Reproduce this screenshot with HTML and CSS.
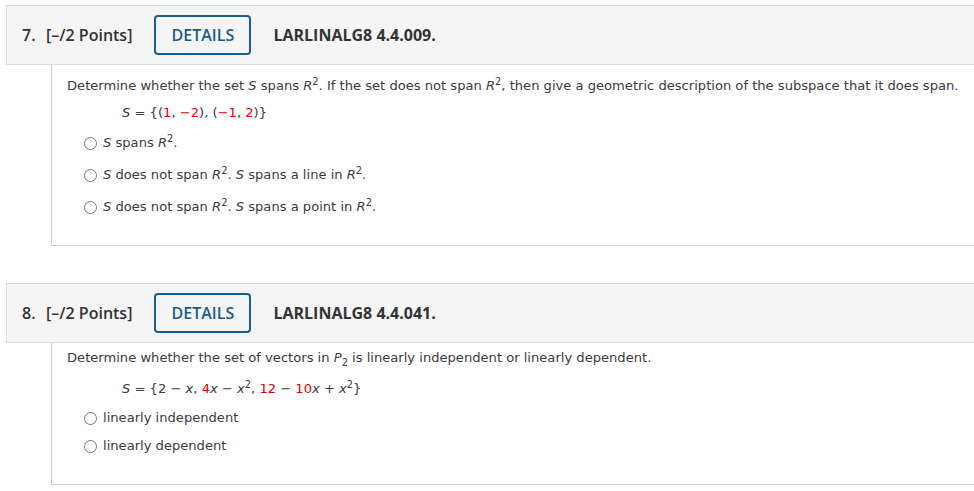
FILE: index.html
```html
<!DOCTYPE html>
<html>
<head>
<meta charset="utf-8">
<link rel="stylesheet" href="styles.css">
</head>
<body>
<div class="page">
  <section class="question q7">
    <div class="qhead">
      <span class="qnum">7.</span>
      <span class="qpts">[–/2 Points]</span>
      <span class="details">DETAILS</span>
      <span class="qref">LARLINALG8 4.4.009.</span>
    </div>
    <div class="qbody">
      <p class="prompt">Determine whether the set <i>S</i> spans <i>R</i><sup>2</sup>. If the set does not span <i>R</i><sup>2</sup>, then give a geometric description of the subspace that it does span.</p>
      <p class="math m7"><i>S</i> = {(<span class="red">1</span>, <span class="red">−2</span>), (<span class="red">−1</span>, <span class="red">2</span>)}</p>
      <div class="options opts7">
        <label class="opt"><span class="radio"></span><span><i>S</i> spans <i>R</i><sup>2</sup>.</span></label>
        <label class="opt"><span class="radio"></span><span><i>S</i> does not span <i>R</i><sup>2</sup>. <i>S</i> spans a line in <i>R</i><sup>2</sup>.</span></label>
        <label class="opt"><span class="radio"></span><span><i>S</i> does not span <i>R</i><sup>2</sup>. <i>S</i> spans a point in <i>R</i><sup>2</sup>.</span></label>
      </div>
    </div>
  </section>
  <section class="question q8">
    <div class="qhead">
      <span class="qnum">8.</span>
      <span class="qpts">[–/2 Points]</span>
      <span class="details">DETAILS</span>
      <span class="qref">LARLINALG8 4.4.041.</span>
    </div>
    <div class="qbody b8">
      <p class="prompt">Determine whether the set of vectors in <i>P</i><sub>2</sub> is linearly independent or linearly dependent.</p>
      <p class="math m8"><i>S</i> = {2 − <i>x</i>, <span class="red">4</span><i>x</i> − <i>x</i><sup>2</sup>, <span class="red">12</span> − <span class="red">10</span><i>x</i> + <i>x</i><sup>2</sup>}</p>
      <div class="options opts8">
        <label class="opt"><span class="radio"></span><span>linearly independent</span></label>
        <label class="opt"><span class="radio"></span><span>linearly dependent</span></label>
      </div>
    </div>
  </section>
</div>
</body>
</html>
```
FILE: styles.css
```css
html, body {
  margin: 0;
  padding: 0;
  background: #fff;
  overflow: hidden;
}
.page {
  padding-top: 5px;
  padding-left: 6px;
  width: 1100px;
}
.question {
  margin-bottom: 37px;
}
.qhead {
  display: flex;
  align-items: center;
  height: 58px;
  background: #f5f5f5;
  border: 1px solid #dcdcdc;
  padding-left: 15px;
  font-family: "Open Sans", sans-serif;
  font-weight: 600;
  font-size: 16px;
  color: #333;
}
.qnum {
  width: 24px;
}
.qpts {
  margin-right: 22px;
}
.details {
  box-sizing: border-box;
  width: 97px;
  height: 40px;
  border: 2px solid #1a5f92;
  border-radius: 4px;
  color: #1b5a8c;
  font-weight: 600;
  display: flex;
  align-items: center;
  justify-content: center;
  margin-right: 22px;
}
.qref {
  color: #333;
  font-weight: 700;
}
.qbody {
  margin-left: 45px;
  border-left: 1px solid #cfcfcf;
  border-bottom: 1px solid #cfcfcf;
  padding: 11px 0 28px 15px;
  font-family: "DejaVu Sans", Verdana, sans-serif;
  font-size: 13.1px;
  color: #3b3b3b;
}
.b8 {
  padding-top: 5px;
}
.prompt, .math {
  margin: 0;
  line-height: 20px;
}
.math {
  padding-left: 55px;
}
.m7 { margin-top: 7px; }
.m8 { margin-top: 11px; }
sup, sub {
  font-size: 0.75em;
  line-height: 0;
}
.red { color: #e00000; }
.options {
  display: flex;
  flex-direction: column;
  padding-left: 17px;
}
.opts7 { margin-top: 10px; gap: 12px; }
.opts8 { margin-top: 9px; gap: 8px; }
.opt {
  display: flex;
  align-items: center;
  line-height: 20px;
  gap: 6px;
}
.radio {
  box-sizing: border-box;
  width: 13px;
  height: 13px;
  border: 1px solid #767676;
  border-radius: 50%;
  background: #fff;
}
```
